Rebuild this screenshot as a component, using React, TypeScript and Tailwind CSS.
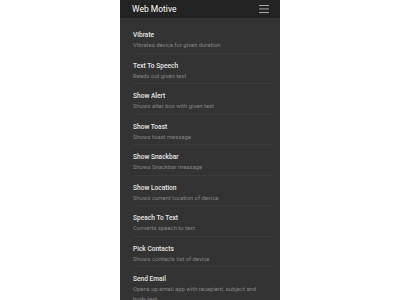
const actions = [
  { title: "Vibrate", desc: "Vibrates device for given duration" },
  { title: "Text To Speech", desc: "Reads out given text" },
  { title: "Show Alert", desc: "Shows alter box with given text" },
  { title: "Show Toast", desc: "Shows toast message" },
  { title: "Show Snackbar", desc: "Shows Snackbar message" },
  { title: "Show Location", desc: "Shows current location of device" },
  { title: "Speach To Text", desc: "Converts speech to text" },
  { title: "Pick Contacts", desc: "Shows contacts list of device" },
  { title: "Send Email", desc: "Opens up email app with recepient, subject and body text" },
];

function MenuIcon() {
  return (
    <svg width="10" height="8" viewBox="0 0 10 8" className="text-[#b5b5b5]">
      <rect x="0" y="0" width="10" height="0.9" fill="currentColor" />
      <rect x="0" y="3.5" width="10" height="0.9" fill="currentColor" />
      <rect x="0" y="7" width="10" height="0.9" fill="currentColor" />
    </svg>
  );
}

export default function App() {
  return (
    <div className="w-[400px] h-[300px] bg-white flex justify-center overflow-hidden font-['Roboto',sans-serif]">
      <div className="w-[160px] h-full bg-[#333333] flex flex-col">
        <header className="h-[18px] shrink-0 bg-[#232323] flex items-center justify-between pl-[12px] pr-[11px]">
          <span className="text-[8.5px] text-white leading-none">Web Motive</span>
          <MenuIcon />
        </header>
        <ul className="pt-[5px] pl-[13px] pr-[7px]">
          {actions.map((a) => (
            <li key={a.title} className="pt-[7px] pb-[2.5px] border-b border-[#3b3b3b]">
              <div className="text-[6.6px] font-medium text-[#e6e6e6] leading-[10px]">{a.title}</div>
              <div className="text-[5.9px] text-[#858585] leading-[10px] pr-[6px]">{a.desc}</div>
            </li>
          ))}
        </ul>
      </div>
    </div>
  );
}
